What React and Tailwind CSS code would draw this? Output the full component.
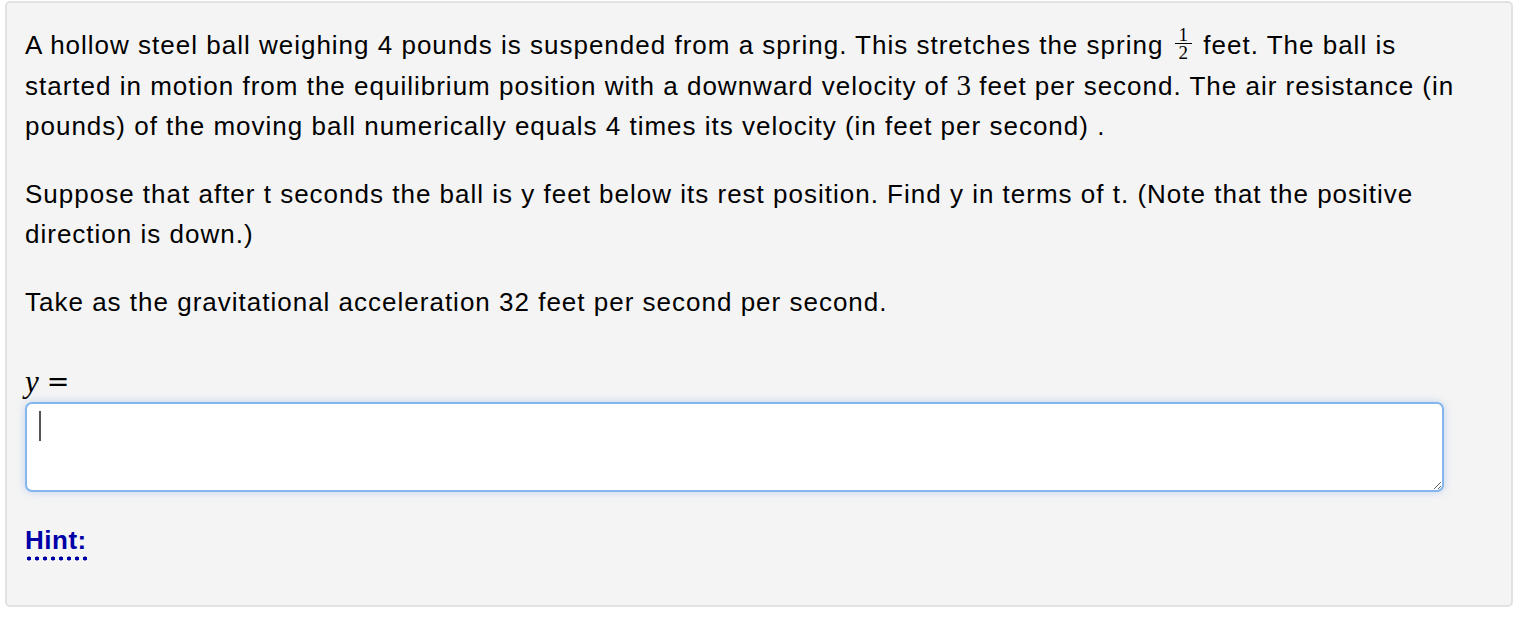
export default function App() {
  const serif = { fontFamily: '"Liberation Serif", "DejaVu Serif", serif' };
  return (
    <div className="w-[1538px] h-[634px] bg-white pt-px pl-[5px]" style={{ fontFamily: '"Liberation Sans", Arial, sans-serif' }}>
      <div className="w-[1508px] h-[606px] bg-[#f4f4f4] border-2 border-[#e2e2e2] rounded-[5px] pl-[18px] pr-[40px] pt-[22px] text-[26px] leading-[40px] tracking-[1px] text-black">
        <p>
          A hollow steel ball weighing 4 pounds is suspended from a spring. This stretches the spring{' '}
          <span className="inline-flex flex-col items-center align-middle mx-[3px] relative -top-[3px] tracking-normal" style={serif}>
            <span className="text-[19px] leading-[13px] pb-[2px] border-b border-black px-[4px]">1</span>
            <span className="text-[19px] leading-[15px] pt-[1px]">2</span>
          </span>{' '}
          feet. The ball is started in motion from the equilibrium position with a downward velocity of{' '}
          <span className="text-[29px] tracking-normal font-medium" style={serif}>3</span> feet per second. The air resistance (in pounds) of the moving ball numerically equals 4 times its velocity (in feet per second) .
        </p>
        <p className="mt-[28px]">
          Suppose that after t seconds the ball is y feet below its rest position. Find y in terms of t. (Note that the positive direction is down.)
        </p>
        <p className="mt-[28px]">Take as the gravitational acceleration 32 feet per second per second.</p>
        <div className="mt-[40px] leading-[40px] flex items-center gap-[8px] tracking-normal">
          <span className="italic text-[31px]" style={serif}>y</span>
          <span className="text-[27px]" style={{ fontFamily: '"DejaVu Serif", serif' }}>=</span>
        </div>
        <div className="relative w-[1419px] h-[90px] mt-0">
          <textarea
            className="w-full h-full bg-white border-2 border-[#82b6ec] rounded-[7px] shadow-[0_0_8px_rgba(100,150,230,0.35)] outline-none block"
            defaultValue=""
          />
          <span className="absolute left-[14px] top-[9px] w-[2px] h-[30px] bg-[#555]" />
        </div>
        <div className="mt-[33px] inline-flex flex-col">
          <span className="text-[#0000a8] font-bold text-[26px] leading-[30px] tracking-[0.5px]">Hint:</span>
          <span className="mt-[1px] h-[5px] w-[64px] bg-[radial-gradient(circle,#0000a8_1.8px,transparent_2.3px)] bg-[length:8px_5px] bg-repeat-x bg-left" />
        </div>
      </div>
    </div>
  );
}
